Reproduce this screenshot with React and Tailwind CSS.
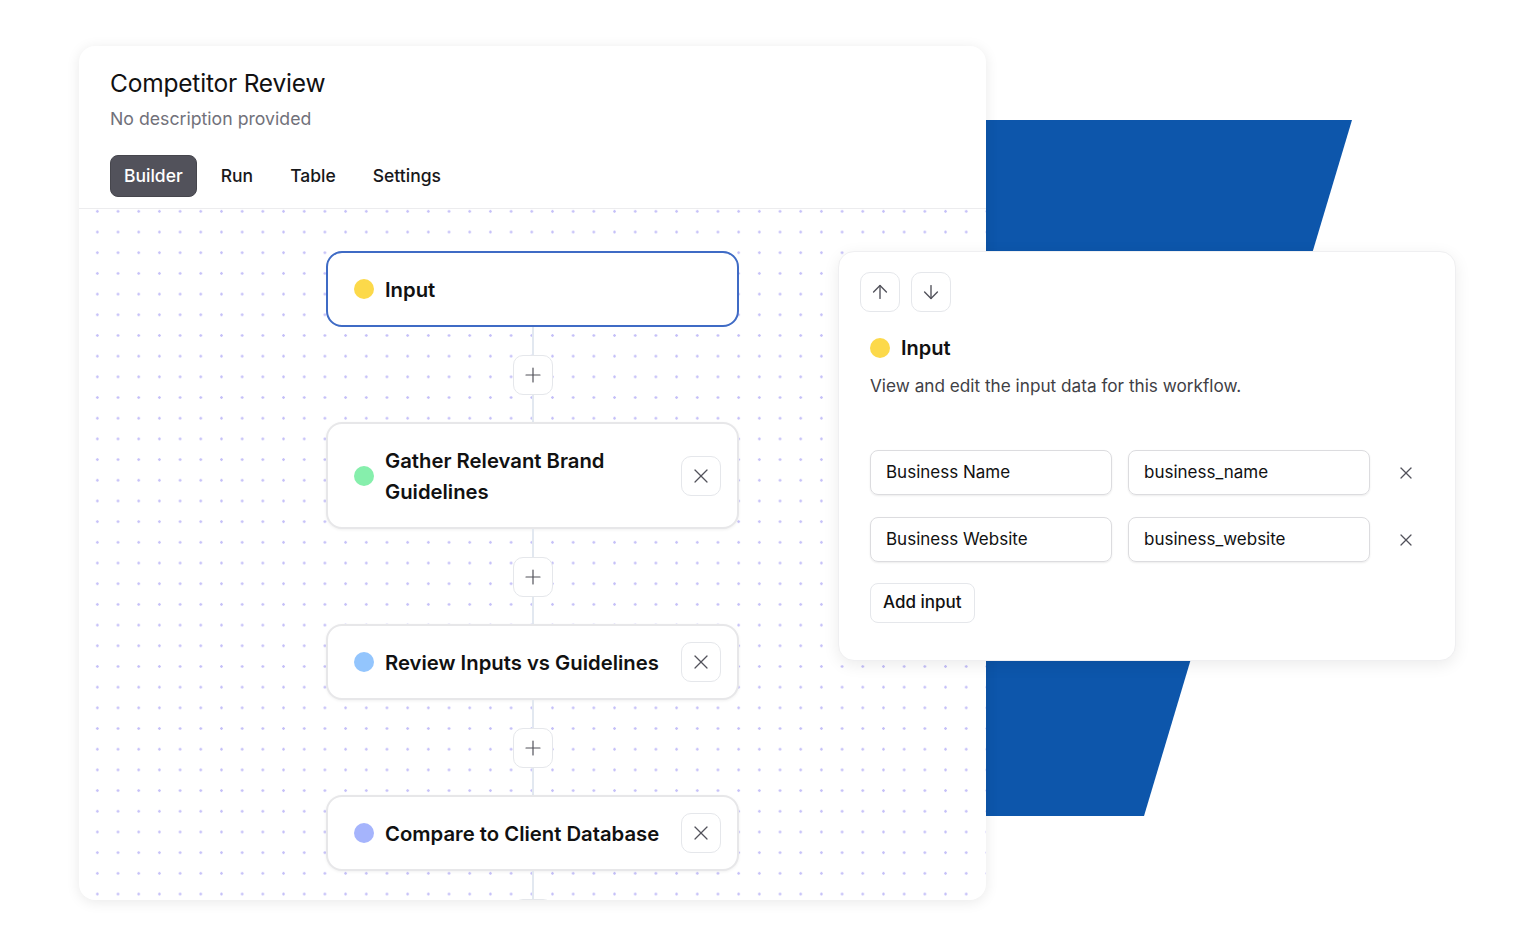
import React from 'react';
import { X, Plus, ArrowUp, ArrowDown } from 'lucide-react';

const steps = [
  { id: 'input', title: 'Input', dot: 'bg-[#fcd94a]', active: true },
  { id: 'gather', title: 'Gather Relevant Brand Guidelines', dot: 'bg-[#86efac]' },
  { id: 'review', title: 'Review Inputs vs Guidelines', dot: 'bg-[#93c5fd]' },
  { id: 'compare', title: 'Compare to Client Database', dot: 'bg-[#a5b4fc]' },
];

const inputs = [
  { label: 'Business Name', key: 'business_name' },
  { label: 'Business Website', key: 'business_website' },
];

const Connector = () => (
  <div className="flex flex-col items-center">
    <div className="w-[2px] h-[28px] bg-[#e2e8f0]" />
    <button className="w-10 h-10 flex items-center justify-center rounded-[10px] border border-[#e5e7eb] bg-white text-[#52525b]">
      <Plus size={24} strokeWidth={1.2} />
    </button>
    <div className="w-[2px] h-[27px] bg-[#e2e8f0]" />
  </div>
);

const StepNode = ({ step }) => (
  <div
    className={`w-[413px] flex items-center gap-[11px] pl-[26px] pr-4 py-[20.5px] rounded-2xl bg-white border-2 ${
      step.active ? 'border-[#3f6bc5]' : 'border-[#e7e7e9] shadow-[0_1px_3px_rgba(0,0,0,0.06)]'
    }`}
  >
    <span className={`w-5 h-5 rounded-full shrink-0 ${step.dot}`} />
    <span className="flex-1 text-[20.3px] leading-[31px] font-semibold text-[#111]">{step.title}</span>
    {!step.active && (
      <button className="-my-[4.5px] w-10 h-10 shrink-0 flex items-center justify-center rounded-[10px] border border-[#e5e7eb] bg-white text-[#52525b]">
        <X size={24} strokeWidth={1.2} />
      </button>
    )}
  </div>
);

const App = () => {
  return (
    <div className="relative w-[1536px] h-[947px] overflow-hidden bg-white font-['Inter','Liberation_Sans',sans-serif] text-[#111]">
      {/* blue backdrop shape */}
      <svg className="absolute left-0 top-0" width="1536" height="947" viewBox="0 0 1536 947">
        <polygon points="900,120 1352,120 1144,816 900,816" fill="#0d56ab" />
      </svg>

      <div className="relative pt-[46px] pl-[79px]">
        <div className="w-[907px] h-[854px] rounded-2xl bg-white overflow-hidden shadow-[0_2px_14px_rgba(0,0,0,0.09)] flex flex-col">
          <div className="px-[31px] pt-[21px] pb-[11px] border-b border-[#ececee]">
            <h1 className="text-[24.5px] leading-[32px] font-normal tracking-[-0.2px]">Competitor Review</h1>
            <p className="mt-[7px] text-[17.7px] leading-[26px] text-[#71717a]">No description provided</p>
            <div className="mt-[23px] flex items-center gap-[11px]">
              <button className="h-[42px] px-[13px] rounded-lg bg-[#52525b] border border-[#46464d] text-white text-[17.5px] font-medium">
                Builder
              </button>
              {['Run', 'Table', 'Settings'].map((t) => (
                <button key={t} className="h-[42px] px-[13px] text-[17.5px] font-medium text-[#18181b]">
                  {t}
                </button>
              ))}
            </div>
          </div>

          <div className="flex-1 bg-[image:radial-gradient(circle,#c5c0f8_1.1px,transparent_1.5px)] bg-[length:20.7px_20.7px] bg-[position:8px_-8px]">
            <div className="flex flex-col items-center pt-[42px]">
              {steps.map((step) => (
                <React.Fragment key={step.id}>
                  <StepNode step={step} />
                  <Connector />
                </React.Fragment>
              ))}
            </div>
          </div>
        </div>
      </div>

      {/* step detail panel */}
      <div className="absolute left-[838px] top-[251px] w-[618px] h-[410px] rounded-2xl bg-white border border-[#efeff1] shadow-[0_4px_16px_rgba(0,0,0,0.08)] px-[21px] pt-[20px]">
        <div className="flex gap-[11px]">
          <button className="w-10 h-10 flex items-center justify-center rounded-[10px] border border-[#e5e7eb] text-[#52525b]">
            <ArrowUp size={22} strokeWidth={1.5} />
          </button>
          <button className="w-10 h-10 flex items-center justify-center rounded-[10px] border border-[#e5e7eb] text-[#52525b]">
            <ArrowDown size={22} strokeWidth={1.5} />
          </button>
        </div>

        <div className="px-[10px]">
          <div className="mt-[22px] flex items-center gap-[11px]">
            <span className="w-5 h-5 rounded-full bg-[#fcd94a]" />
            <span className="text-[20px] leading-[28px] font-semibold">Input</span>
          </div>
          <p className="mt-[11px] text-[17.2px] leading-[26px] text-[#3f3f46]">
            View and edit the input data for this workflow.
          </p>

          <div className="mt-[51px] flex flex-col gap-[22px]">
            {inputs.map((row) => (
              <div key={row.key} className="flex items-center gap-4">
                <div className="w-[242px] h-[45px] flex items-center px-[15px] rounded-lg border border-[#dcdcdf] shadow-[0_1px_2px_rgba(0,0,0,0.08)] text-[17px]">
                  {row.label}
                </div>
                <div className="w-[242px] h-[45px] flex items-center px-[15px] rounded-lg border border-[#dcdcdf] shadow-[0_1px_2px_rgba(0,0,0,0.08)] text-[17px]">
                  {row.key}
                </div>
                <button className="ml-[10px] text-[#52525b]">
                  <X size={20} strokeWidth={1.5} />
                </button>
              </div>
            ))}
          </div>

          <button className="mt-[21px] h-[40px] px-[12px] rounded-lg border border-[#e5e7eb] text-[17px] font-medium">
            Add input
          </button>
        </div>
      </div>
    </div>
  );
};

export default App;
